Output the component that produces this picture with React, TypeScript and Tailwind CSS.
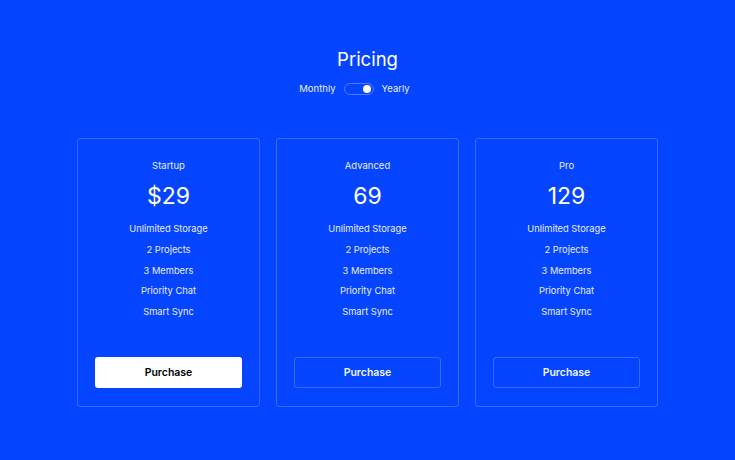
import React, { useState } from 'react';

const plans = [
  { name: 'Startup', price: '$29', primary: true },
  { name: 'Advanced', price: '69', primary: false },
  { name: 'Pro', price: '129', primary: false },
];

const features = ['Unlimited Storage', '2 Projects', '3 Members', 'Priority Chat', 'Smart Sync'];

export default function App() {
  const [yearly, setYearly] = useState(true);

  return (
    <div className="w-[735px] h-[460px] bg-[#0645ff] text-white font-['Inter',sans-serif] flex flex-col items-center">
      <h1 className="mt-[47px] text-[18.5px] leading-[24px] font-normal">Pricing</h1>
      <div className="mt-[12px] mr-[26px] flex items-center gap-[8px] text-[9.5px] leading-[12px] text-[#e6ecff]">
        <span>Monthly</span>
        <button
          onClick={() => setYearly(!yearly)}
          className={`w-[30px] h-[12px] rounded-full border border-[#4f7bff] flex items-center px-[2px] ${yearly ? 'justify-end' : 'justify-start'}`}
        >
          <span className="block w-[8px] h-[8px] rounded-full bg-white" />
        </button>
        <span>Yearly</span>
      </div>

      <div className="mt-[43px] flex gap-[16px]">
        {plans.map((p) => (
          <div
            key={p.name}
            className="w-[183px] h-[269px] rounded-[3px] border border-[#3a6bff] flex flex-col items-center px-[17px]"
          >
            <div className="mt-[21px] text-[9.5px] leading-[12px] text-[#e6ecff]">{p.name}</div>
            <div className="mt-[10px] text-[23px] leading-[28px] text-white">{p.price}</div>
            <ul className="mt-[13px] flex flex-col items-center gap-[8.75px] text-[9.3px] leading-[12px] text-[#e6ecff]">
              {features.map((f) => (
                <li key={f}>{f}</li>
              ))}
            </ul>
            <button
              className={`mt-auto mb-[18px] w-full h-[31px] rounded-[3px] text-[10.5px] font-semibold ${
                p.primary ? 'bg-white text-black' : 'border border-[#3a6bff] text-[#f0f4ff]'
              }`}
            >
              Purchase
            </button>
          </div>
        ))}
      </div>
    </div>
  );
}
